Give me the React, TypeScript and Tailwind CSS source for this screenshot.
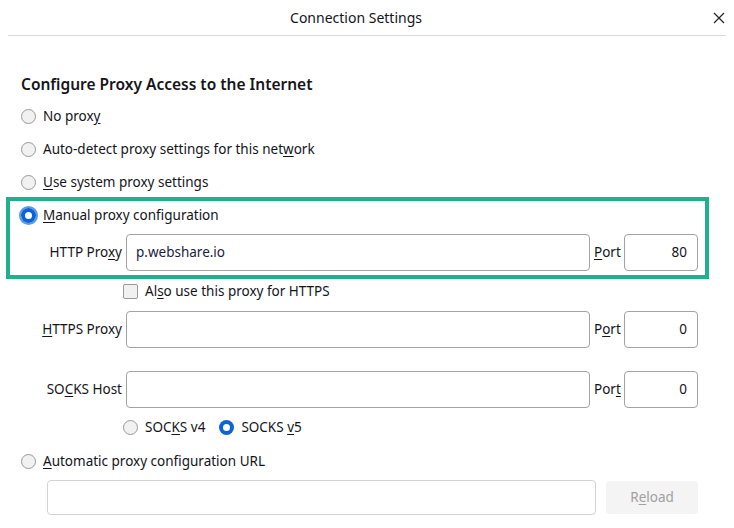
import React from "react";

const F = { fontFamily: '"Noto Sans", "Open Sans", sans-serif' };

function U({ children }: { children: React.ReactNode }) {
  return <span className="underline underline-offset-2 decoration-1">{children}</span>;
}

function Radio({ checked = false, focus = false }: { checked?: boolean; focus?: boolean }) {
  if (checked) {
    return (
      <span
        className={
          "flex items-center justify-center rounded-full shrink-0 " +
          (focus ? "w-[19px] h-[19px] border-2 border-[#5a9be8] -mx-[2px]" : "w-[15px] h-[15px]")
        }
      >
        <span className="w-[15px] h-[15px] rounded-full bg-[#0a64d6] flex items-center justify-center">
          <span className="w-[7px] h-[7px] rounded-full bg-white" />
        </span>
      </span>
    );
  }
  return <span className="w-[15px] h-[15px] rounded-full border border-[#999] bg-[#f1f1f1] shrink-0" />;
}

function RadioRow({ label, checked, focus, className = "" }: { label: React.ReactNode; checked?: boolean; focus?: boolean; className?: string }) {
  return (
    <div className={"flex items-center gap-[7px] " + className}>
      <Radio checked={checked} focus={focus} />
      <span>{label}</span>
    </div>
  );
}

function Field({ label, value = "", port, portLabel }: { label: React.ReactNode; value?: string; port: string; portLabel: React.ReactNode }) {
  return (
    <div className="flex items-center h-[37px]">
      <div className="w-[102px] text-right pr-[1px] whitespace-nowrap">{label}</div>
      <div className="ml-[3px] w-[464px] h-[37px] border border-[#a3a3a3] rounded-[4px] bg-white flex items-center px-[9px] text-[#1c1c40]">
        {value}
      </div>
      <div className="ml-[4px] w-[30px]">{portLabel}</div>
      <div className="w-[74px] h-[37px] border border-[#a3a3a3] rounded-[4px] bg-white flex items-center justify-end px-[10px]">
        {port}
      </div>
    </div>
  );
}

export default function App() {
  return (
    <div className="w-[734px] h-[528px] bg-white text-[#15141a] text-[13.5px] overflow-hidden" style={F}>
      <div className="h-[35px] grid grid-cols-[1fr_auto_1fr] items-center">
        <div />
        <div className="text-[14px] pr-[22px]">Connection Settings</div>
        <div className="flex justify-end pr-[9px]">
          <svg width="12" height="12" viewBox="0 0 12 12" className="text-[#222]">
            <path d="M1 1 L11 11 M11 1 L1 11" stroke="currentColor" strokeWidth="1.2" fill="none" />
          </svg>
        </div>
      </div>
      <div className="mx-[8px] h-px bg-[#dadada]" />

      <div className="pl-[21px]">
        <div className="mt-[39px] h-[20px] flex items-center text-[15.5px] font-semibold">
          Configure Proxy Access to the Internet
        </div>
        <div className="mt-[5px]">
          <RadioRow label={<>No prox<U>y</U></>} className="h-[32px]" />
          <RadioRow label={<>Auto-detect proxy settings for this net<U>w</U>ork</>} className="h-[34px]" />
          <RadioRow label={<><U>U</U>se system proxy settings</>} className="h-[33px]" />
        </div>

        <div className="relative">
          <div className="pointer-events-none absolute left-[-15px] top-[-2px] w-[703px] h-[82px] border-[4px] border-[#1fb08e]" />
          <RadioRow label={<><U>M</U>anual proxy configuration</>} checked focus className="h-[32px] gap-[5px]" />
          <div className="mt-[3px]">
            <Field label={<>HTTP Pro<U>x</U>y</>} value="p.webshare.io" port="80" portLabel={<><U>P</U>ort</>} />
          </div>
        </div>

        <div className="flex items-center h-[40px] pl-[102px] gap-[7px]">
          <span className="w-[15px] h-[15px] border border-[#999] bg-[#f1f1f1] rounded-[2px]" />
          <span>Al<U>s</U>o use this proxy for HTTPS</span>
        </div>

        <Field label={<><U>H</U>TTPS Proxy</>} port="0" portLabel={<>P<U>o</U>rt</>} />
        <div className="h-[23px]" />
        <Field label={<>SO<U>C</U>KS Host</>} port="0" portLabel={<>Por<U>t</U></>} />

        <div className="flex items-center h-[38px] pl-[102px] gap-[14px]">
          <div className="flex items-center gap-[7px]">
            <Radio />
            <span>SOC<U>K</U>S v4</span>
          </div>
          <div className="flex items-center gap-[7px]">
            <Radio checked />
            <span>SOCKS <U>v</U>5</span>
          </div>
        </div>

        <RadioRow label={<><U>A</U>utomatic proxy configuration URL</>} className="h-[30px]" />

        <div className="flex items-center mt-[4px] pl-[26px] gap-[10px]">
          <div className="w-[549px] h-[35px] border border-[#d3d3d3] rounded-[4px] bg-white" />
          <div className="w-[92px] h-[33px] rounded-[4px] bg-[#f4f4f4] flex items-center justify-center text-[#a0a0a0]">
            R<U>e</U>load
          </div>
        </div>
      </div>
    </div>
  );
}
